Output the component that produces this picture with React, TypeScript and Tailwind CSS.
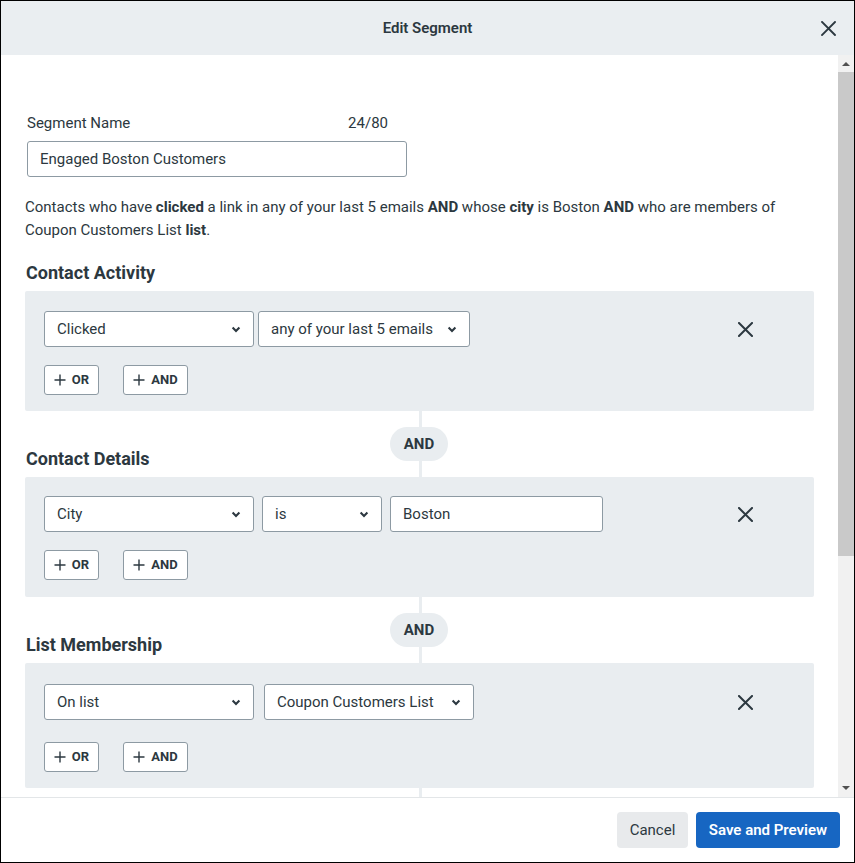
import React from 'react';

const ink = 'text-[#2c3840]';

const Cross = ({ size = 14, stroke = 2 }: { size?: number; stroke?: number }) => (
  <svg width={size} height={size} viewBox={`0 0 ${size} ${size}`} fill="none">
    <path d={`M1 1 L${size - 1} ${size - 1} M${size - 1} 1 L1 ${size - 1}`} stroke="#2c3840" strokeWidth={stroke} strokeLinecap="square" />
  </svg>
);

const Chevron = () => (
  <svg width="10" height="7" viewBox="0 0 10 7" fill="none">
    <path d="M1.6 1.6 L5 5 L8.4 1.6" stroke="#2c3840" strokeWidth="2.1" />
  </svg>
);

const Plus = () => (
  <svg width="12" height="12" viewBox="0 0 12 12" fill="none">
    <path d="M6 0.5 V11.5 M0.5 6 H11.5" stroke="#2c3840" strokeWidth="1.4" />
  </svg>
);

const Select = ({ label, className }: { label: string; className: string }) => (
  <div className={`h-[36px] bg-white border border-[#8d9aa3] rounded-[3px] flex items-center justify-between pl-[12px] pr-[12px] text-[15px] ${ink} ${className}`}>
    <span>{label}</span>
    <Chevron />
  </div>
);

const AddButtons = () => (
  <div className="flex gap-[24px]">
    <button className={`w-[55px] h-[30px] bg-white border border-[#8d9aa3] rounded-[3px] flex items-center justify-center gap-[6px] text-[13px] font-bold ${ink}`}>
      <Plus />
      <span>OR</span>
    </button>
    <button className={`w-[65px] h-[30px] bg-white border border-[#8d9aa3] rounded-[3px] flex items-center justify-center gap-[6px] text-[13px] font-bold ${ink}`}>
      <Plus />
      <span>AND</span>
    </button>
  </div>
);

const Connector = ({ title }: { title: string }) => (
  <div className="relative h-[66px]">
    <div className="absolute left-[394px] top-0 bottom-0 w-[3px] bg-[#e9edf0]" />
    <div className={`absolute left-[365px] top-[16px] w-[58px] h-[34px] rounded-full bg-[#e9edf0] flex items-center justify-center text-[15px] font-bold ${ink}`}>
      AND
    </div>
    <h3 className={`absolute left-[1px] bottom-[8px] leading-[20px] text-[18px] font-bold ${ink}`}>{title}</h3>
  </div>
);

export default function App() {
  return (
    <div className="w-[855px] h-[863px] border border-black bg-white flex flex-col overflow-hidden font-['Roboto',sans-serif]">
      {/* Header */}
      <div className="relative h-[54px] shrink-0 bg-[#eaeef1] flex items-center justify-center">
        <h2 className={`text-[15px] font-semibold ${ink}`}>Edit Segment</h2>
        <button className="absolute right-[18px] top-[20px]">
          <Cross size={15} stroke={1.9} />
        </button>
      </div>

      {/* Body */}
      <div className="flex flex-1 min-h-0">
        <div className="flex-1 overflow-hidden pl-[24px] pr-[24px] pt-[58px]">
          <div className="pl-[2px]">
            <div className={`w-[361px] flex justify-between leading-[20px] text-[15px] ${ink}`}>
              <span>Segment Name</span>
              <span>24/80</span>
            </div>
            <div className={`mt-[8px] w-[380px] h-[36px] border border-[#8d9aa3] rounded-[3px] flex items-center px-[12px] text-[15px] ${ink}`}>
              Engaged Boston Customers
            </div>
          </div>

          <p className={`mt-[19px] text-[15px] leading-[23px] ${ink}`}>
            Contacts who have <b>clicked</b> a link in any of your last 5 emails <b>AND</b> whose <b>city</b> is Boston <b>AND</b> who are members of Coupon Customers List <b>list</b>.
          </p>

          <h3 className={`mt-[21px] mb-[8px] pl-[1px] leading-[20px] text-[18px] font-bold ${ink}`}>Contact Activity</h3>

          {/* Contact Activity */}
          <div className="bg-[#e9edf0] rounded-[2px] pl-[19px] pt-[20px] pb-[16px]">
            <div className="flex items-center">
              <Select label="Clicked" className="w-[210px]" />
              <Select label="any of your last 5 emails" className="w-[212px] ml-[4px]" />
              <button className="ml-auto mr-[61px]">
                <Cross size={15} stroke={2} />
              </button>
            </div>
            <div className="mt-[18px]">
              <AddButtons />
            </div>
          </div>

          <Connector title="Contact Details" />

          {/* Contact Details */}
          <div className="bg-[#e9edf0] rounded-[2px] pl-[19px] pt-[19px] pb-[17px]">
            <div className="flex items-center">
              <Select label="City" className="w-[210px]" />
              <Select label="is" className="w-[120px] ml-[8px]" />
              <div className={`ml-[8px] w-[213px] h-[36px] bg-white border border-[#8d9aa3] rounded-[3px] flex items-center px-[12px] text-[15px] ${ink}`}>
                Boston
              </div>
              <button className="ml-auto mr-[61px]">
                <Cross size={15} stroke={2} />
              </button>
            </div>
            <div className="mt-[18px]">
              <AddButtons />
            </div>
          </div>

          <Connector title="List Membership" />

          {/* List Membership */}
          <div className="bg-[#e9edf0] rounded-[2px] pl-[19px] pt-[21px] pb-[16px]">
            <div className="flex items-center">
              <Select label="On list" className="w-[210px]" />
              <Select label="Coupon Customers List" className="w-[210px] ml-[10px]" />
              <button className="ml-auto mr-[61px]">
                <Cross size={15} stroke={2} />
              </button>
            </div>
            <div className="mt-[22px]">
              <AddButtons />
            </div>
          </div>
          <div className="relative h-[40px]">
            <div className="absolute left-[394px] top-0 bottom-0 w-[3px] bg-[#e9edf0]" />
          </div>
        </div>

        {/* Scrollbar */}
        <div className="w-[16px] shrink-0 bg-[#f1f1f1] flex flex-col">
          <div className="h-[17px] flex items-center justify-center">
            <svg width="8" height="5" viewBox="0 0 8 5"><path d="M0 5 L4 1 L8 5 Z" fill="#505050" /></svg>
          </div>
          <div className="h-[484px] bg-[#c9c9c9]" />
          <div className="flex-1" />
          <div className="h-[17px] flex items-center justify-center">
            <svg width="8" height="5" viewBox="0 0 8 5"><path d="M0 0 L4 4 L8 0 Z" fill="#505050" /></svg>
          </div>
        </div>
      </div>

      {/* Footer */}
      <div className="h-[65px] shrink-0 border-t border-[#e3e6e8] flex items-center justify-end gap-[8px] pr-[14px]">
        <button className={`h-[36px] w-[71px] rounded-[4px] bg-[#e8eaec] text-[15px] ${ink}`}>Cancel</button>
        <button className="h-[36px] w-[144px] rounded-[4px] bg-[#1766c2] text-[15px] font-semibold text-white">Save and Preview</button>
      </div>
    </div>
  );
}
